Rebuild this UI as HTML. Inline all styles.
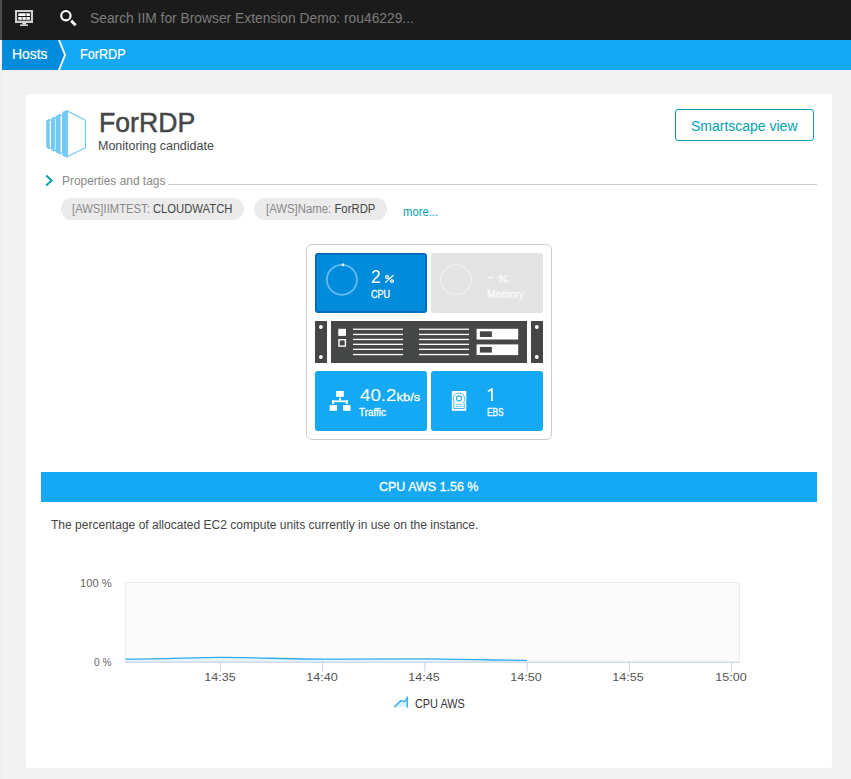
<!DOCTYPE html>
<html><head><meta charset="utf-8">
<style>
*{margin:0;padding:0;box-sizing:border-box}
html,body{width:851px;height:779px;overflow:hidden;background:#f2f2f2;font-family:"Liberation Sans",sans-serif}
.a{position:absolute}
.t{position:absolute;white-space:nowrap;line-height:1;transform-origin:0 0}
</style></head><body>
<!-- left strip -->
<div class="a" style="left:0;top:0;width:2px;height:40px;background:#4d4d4d"></div>
<div class="a" style="left:0;top:40px;width:2px;height:30px;background:#f5f5f5"></div>
<div class="a" style="left:0;top:70px;width:2px;height:709px;background:#efefef"></div>
<!-- top bar -->
<div class="a" style="left:2px;top:0;width:849px;height:40px;background:#1b1b1b"></div>
<svg class="a" style="left:0;top:0" width="100" height="40" viewBox="0 0 100 40">
  <rect x="15" y="10" width="18" height="13" fill="#cfcfcf"/>
  <rect x="17.1" y="12.1" width="13.8" height="8.5" fill="#0e0e0e"/>
  <rect x="18.3" y="13.3" width="11.6" height="2.7" fill="#fff"/>
  <rect x="18.3" y="17" width="11.6" height="2.8" fill="#fff"/>
  <rect x="25.5" y="13.3" width="1" height="2.7" fill="#555"/>
  <rect x="21.6" y="17" width="1" height="2.8" fill="#555"/>
  <rect x="25.5" y="17" width="1" height="2.8" fill="#555"/>
  <rect x="22.4" y="23" width="3.7" height="1.6" fill="#e8e8e8"/>
  <rect x="20" y="24.4" width="8" height="1.6" fill="#cfcfcf"/>
  <circle cx="65.9" cy="15.7" r="4.65" fill="none" stroke="#fff" stroke-width="2.1"/>
  <line x1="71.2" y1="20.8" x2="75.6" y2="25.3" stroke="#fff" stroke-width="3"/>
</svg>
<div id="search" class="t" style="left:90.2px;top:11.1px;font-size:14px;color:#7c7c7c;transform:scaleX(0.9863)">Search IIM for Browser Extension Demo: rou46229...</div>
<!-- breadcrumb -->
<div class="a" style="left:2px;top:40px;width:849px;height:30px;background:#14a8f5"></div>
<svg class="a" style="left:0;top:40px" width="80" height="30" viewBox="0 0 80 30">
  <polygon points="2,0 58.5,0 65,15 58.5,30 2,30" fill="#008cdb"/>
  <polyline points="58.6,-1 65,15 58.6,31" fill="none" stroke="#fff" stroke-width="1.9"/>
</svg>
<div id="hosts" class="t" style="left:12.00px;top:46.95px;font-size:14px;color:#fff;transform:scaleX(0.9943);-webkit-text-stroke:0.2px #fff">Hosts</div>
<div id="bc2" class="t" style="left:80.43px;top:47.05px;font-size:14px;color:#fff;transform:scaleX(0.9040);-webkit-text-stroke:0.2px #fff">ForRDP</div>

<!-- card -->
<div class="a" style="left:26px;top:94px;width:806px;height:674px;background:#fff;border-radius:3px"></div>

<!-- host icon -->
<svg class="a" style="left:40px;top:104px" width="60" height="60" viewBox="40 104 60 60">
  <g stroke="#73c9f5" stroke-width="1.2" fill="#fff" stroke-linejoin="miter">
    <polygon points="49,119.6 51.6,120.4 51.6,147.6 49,148.4"/>
    <polygon points="54.2,117.4 56.3,118.2 56.3,150 54.2,150.8"/>
    <polygon points="59.9,114.6 62.6,115.8 62.6,152.6 59.9,153.6"/>
    <polygon points="67.2,110.9 85.4,120.3 85.4,147.7 67.2,156.8"/>
  </g>
  <g fill="#73c9f5">
    <polygon points="46.2,120.3 48.9,119.3 49.3,119.5 49.3,148.5 48.9,148.7 46.2,147.6"/>
    <polygon points="51.2,118.3 53.9,117 54.4,117.2 54.4,151 53.9,151.2 51.2,149.9"/>
    <polygon points="55.8,115.9 59.2,114.3 60.1,114.5 60.1,153.7 59.2,154 55.8,152.3"/>
    <polygon points="62.3,112.1 66.8,110.3 67.4,110.5 67.4,157.3 66.8,157.5 62.3,155.5"/>
  </g>
</svg>
<div id="title" class="t" style="left:98.66px;top:109.20px;font-size:28px;color:#454646;-webkit-text-stroke:0.5px #454646;transform:scaleX(0.9515)">ForRDP</div>
<div id="subt" class="t" style="left:98.18px;top:140.00px;font-size:12px;color:#454646;transform:scaleX(1.0396)">Monitoring candidate</div>

<!-- smartscape button -->
<div class="a" style="left:675px;top:109px;width:139px;height:32px;border:1px solid #00a1b2;border-radius:3px"></div>
<div id="smart" class="t" style="left:690.80px;top:118.50px;font-size:14px;color:#00a1b2;transform:scaleX(0.9991)">Smartscape view</div>

<!-- properties -->
<svg class="a" style="left:40px;top:170px" width="20" height="20" viewBox="40 170 20 20">
  <polyline points="46.2,175.6 51.6,180.6 46.2,185.6" fill="none" stroke="#00a1b2" stroke-width="2"/>
</svg>
<div id="props" class="t" style="left:61.81px;top:173.80px;font-size:13px;color:#898989;transform:scaleX(0.9168)">Properties and tags</div>
<div class="a" style="left:168px;top:184px;width:649px;height:1px;background:#c9c9cd"></div>

<!-- pills -->
<div class="a" style="left:61px;top:198px;width:183px;height:22px;border-radius:11px;background:#ebebeb"></div>
<div id="pill1" class="t" style="left:72.05px;top:203.30px;font-size:12.5px;color:#898989;transform:scaleX(0.9011)">[AWS]IIMTEST: <span style="color:#454646">CLOUDWATCH</span></div>
<div class="a" style="left:254px;top:198px;width:133px;height:22px;border-radius:11px;background:#ebebeb"></div>
<div id="pill2" class="t" style="left:265.57px;top:203.30px;font-size:12.5px;color:#898989;transform:scaleX(0.9091)">[AWS]Name: <span style="color:#454646">ForRDP</span></div>
<div id="more" class="t" style="left:402.57px;top:205.70px;font-size:12.5px;color:#00a1b2;transform:scaleX(0.9026)">more...</div>


<!-- infographic -->
<div class="a" style="left:306px;top:244px;width:246px;height:196px;border:1px solid #cccccc;border-radius:6px;background:#fff"></div>
<div class="a" style="left:315px;top:253px;width:112px;height:59.5px;background:#008cdb;border:2px solid #006bbb;border-radius:3px"></div>
<div class="a" style="left:431px;top:253px;width:112px;height:59.5px;background:#e3e3e3;border-radius:3px"></div>
<svg class="a" style="left:300px;top:240px" width="260" height="80" viewBox="300 240 260 80">
  <circle cx="341.9" cy="279.8" r="15" fill="none" stroke="#62bcef" stroke-width="1.8"/>
  <ellipse cx="343" cy="264.8" rx="1.2" ry="1.5" fill="#fff"/>
  <circle cx="456" cy="279.8" r="15" fill="none" stroke="#ececec" stroke-width="1.8"/>
</svg>
<div id="cpuv" class="t" style="left:370.9px;top:268.70px;font-size:17.5px;color:#fff;transform:scaleX(0.98)">2</div>
<svg id="cpup" class="a" style="left:380px;top:270px" width="130" height="16" viewBox="380 270 130 16"><g transform="translate(0,0)" fill="none" stroke="#fff" stroke-width="1.25"><ellipse cx="387" cy="276.9" rx="1.55" ry="1.35"/><ellipse cx="392" cy="281.1" rx="1.55" ry="1.35"/><line x1="393.4" y1="275.3" x2="385.2" y2="282.6"/></g><g transform="translate(113.7,0)" fill="none" stroke="#fbfbfb" stroke-width="1.25"><ellipse cx="387" cy="276.9" rx="1.55" ry="1.35"/><ellipse cx="392" cy="281.1" rx="1.55" ry="1.35"/><line x1="393.4" y1="275.3" x2="385.2" y2="282.6"/></g><rect x="487.2" y="276.8" width="7.3" height="1.3" fill="#fbfbfb"/></svg>
<div id="cpul" class="t" style="left:371.00px;top:290.20px;font-size:10px;color:#fff;transform:scaleX(0.9048);-webkit-text-stroke:0.3px #fff">CPU</div>

<div id="meml" class="t" style="left:486.78px;top:290.20px;font-size:10px;color:#fbfbfb;transform:scaleX(1.0306);-webkit-text-stroke:0.3px #fbfbfb">Memory</div>

<svg class="a" style="left:300px;top:315px" width="260" height="55" viewBox="300 315 260 55">
  <rect x="315" y="321" width="12" height="42" fill="#454646"/>
  <circle cx="320.9" cy="327" r="1.9" fill="#fff"/>
  <circle cx="320.9" cy="357" r="1.9" fill="#fff"/>
  <rect x="331" y="321" width="196" height="42" fill="#454646"/>
  <rect x="531" y="321" width="12" height="42" fill="#454646"/>
  <circle cx="536.8" cy="327" r="1.9" fill="#fff"/>
  <circle cx="536.8" cy="357" r="1.9" fill="#fff"/>
  <rect x="338.3" y="328.8" width="7.7" height="7.1" fill="#fff"/>
  <rect x="339" y="339.7" width="6.4" height="6.4" fill="none" stroke="#fff" stroke-width="1.4"/>
  <g fill="#fff">
    <rect x="353" y="328.6" width="50" height="1.3"/>
    <rect x="353" y="333.8" width="50" height="1.3"/>
    <rect x="353" y="338.8" width="50" height="1.3"/>
    <rect x="353" y="343.7" width="50" height="1.3"/>
    <rect x="353" y="348.7" width="50" height="1.3"/>
    <rect x="353" y="353.9" width="50" height="1.3"/>
    <rect x="419" y="328.6" width="50" height="1.3"/>
    <rect x="419" y="333.8" width="50" height="1.3"/>
    <rect x="419" y="338.8" width="50" height="1.3"/>
    <rect x="419" y="343.7" width="50" height="1.3"/>
    <rect x="419" y="348.7" width="50" height="1.3"/>
    <rect x="419" y="353.9" width="50" height="1.3"/>
    <rect x="476.6" y="328.8" width="41.6" height="10.7"/>
    <rect x="476.6" y="344.4" width="41.6" height="10.7"/>
  </g>
  <rect x="479.9" y="331.3" width="12" height="5.7" fill="#454646"/>
  <rect x="479.9" y="346.9" width="12" height="5.7" fill="#454646"/>
</svg>

<div class="a" style="left:315px;top:371px;width:112px;height:59.6px;background:#14a8f5;border-radius:3px"></div>
<div class="a" style="left:431px;top:371px;width:112px;height:59.6px;background:#14a8f5;border-radius:3px"></div>
<svg class="a" style="left:320px;top:380px" width="160" height="40" viewBox="320 380 160 40">
  <g fill="#fff">
    <rect x="336.1" y="391" width="7.7" height="5.8"/>
    <rect x="339.1" y="397.8" width="1.8" height="3"/>
    <rect x="332.1" y="400.4" width="15.7" height="1.8"/>
    <rect x="332.1" y="400.4" width="2" height="3.6"/>
    <rect x="345.8" y="400.4" width="2" height="3.6"/>
    <rect x="329.6" y="405.1" width="7.4" height="5.7"/>
    <rect x="343.1" y="405.1" width="7.4" height="5.7"/>
    <rect x="451.8" y="391" width="14.5" height="19.8"/>
  </g>
  <g fill="none" stroke="#4cb8f3" stroke-width="1">
    <path d="M454.6,402.6 A5.8,5.8 0 1 1 463.4,402.6"/>
    <path d="M454.6,402.6 L453.8,403.4 L453.8,408.5 L464.2,408.5 L464.2,403.4 L463.4,402.6"/>
    <circle cx="459" cy="398.4" r="2.5" stroke="#2db0f4" stroke-width="1.2"/>
    <line x1="455.5" y1="404.6" x2="462.5" y2="404.6" stroke="#80cef7"/>
    <line x1="455.5" y1="406.6" x2="462.5" y2="406.6" stroke="#80cef7"/>
  </g>
</svg>
<div id="trv" class="t" style="left:359.6px;top:387.5px;font-size:16px;color:#fff;transform:scaleX(1.1725)">40.2<span style="font-size:11px;-webkit-text-stroke:0.3px #fff">kb/s</span></div>
<div id="trl" class="t" style="left:358.9px;top:407.7px;font-size:10px;color:#fff;transform:scaleX(0.9893);-webkit-text-stroke:0.3px #fff">Traffic</div>
<svg id="ebsv" class="a" style="left:480px;top:380px" width="20" height="30" viewBox="480 380 20 30"><path d="M487.9,391.3 L491.9,389.2 L491.9,401.1" fill="none" stroke="#fff" stroke-width="1.75" stroke-linejoin="miter"/></svg>
<div id="ebsl" class="t" style="left:486.90px;top:407.60px;font-size:10px;color:#fff;transform:scaleX(0.8250);-webkit-text-stroke:0.3px #fff">EBS</div>

<!-- CPU AWS section -->
<div class="a" style="left:41px;top:472px;width:776px;height:30px;background:#14a8f5"></div>
<div id="cpuaws" class="t" style="left:378.5px;top:479.8px;font-size:13.5px;color:#fff;transform:scaleX(0.9250);-webkit-text-stroke:0.3px #fff">CPU AWS 1.56 %</div>
<div id="desc" class="t" style="left:50.6px;top:519.10px;font-size:12.5px;color:#454646;transform:scaleX(0.9626)">The percentage of allocated EC2 compute units currently in use on the instance.</div>

<!-- chart -->
<div class="a" style="left:125px;top:582px;width:614.5px;height:80.5px;background:#fbfbfb;border:1px solid #ececec;border-bottom:none"></div>
<svg class="a" style="left:0;top:560px" width="851" height="160" viewBox="0 560 851 160">
  <path d="M125.6,662 L125.6,659.2 C170,658.6 200,657.4 220.4,657.4 C250,657.4 290,659 322.6,659.1 C360,659.1 400,658.8 424.8,658.8 C460,658.9 500,660.2 527,660.4 L527,662 Z" fill="#e6f4fd"/>
  <path d="M125.6,659.2 C170,658.6 200,657.4 220.4,657.4 C250,657.4 290,659 322.6,659.1 C360,659.1 400,658.8 424.8,658.8 C460,658.9 500,660.2 527,660.4" fill="none" stroke="#2eacef" stroke-width="1.35"/>
  <rect x="125" y="661.6" width="614.5" height="1.2" fill="#c9d3e4"/>
  <g fill="#c9d3e4">
    <rect x="220" y="662" width="1" height="9.5"/>
    <rect x="322.2" y="662" width="1" height="9.5"/>
    <rect x="424.4" y="662" width="1" height="9.5"/>
    <rect x="526.6" y="662" width="1" height="9.5"/>
    <rect x="628.8" y="662" width="1" height="9.5"/>
    <rect x="731" y="662" width="1" height="9.5"/>
  </g>
  <path d="M394.3,707.4 L394.3,706.8 L400.9,700.6 L404.6,701.6 L407.3,697.8 L407.3,707.4 Z" fill="#dff1fc"/>
  <polyline points="394.3,707 400.9,700.6 404.6,701.6 407.3,697.8 407.3,707.4" fill="none" stroke="#36b3f0" stroke-width="1.5"/>
</svg>
<div id="y100" class="t" style="left:80.01px;top:578.00px;font-size:11.5px;color:#666;transform:scaleX(0.9719)">100 %</div>
<div id="y0" class="t" style="left:93.81px;top:657.10px;font-size:11.5px;color:#666;transform:scaleX(0.8850)">0 %</div>
<div id="x1" class="t" style="left:189.60px;top:671.5px;width:60px;text-align:center;font-size:11.5px;color:#555;transform:scaleX(1.09);transform-origin:50% 0">14:35</div>
<div id="x2" class="t" style="left:291.80px;top:671.5px;width:60px;text-align:center;font-size:11.5px;color:#555;transform:scaleX(1.09);transform-origin:50% 0">14:40</div>
<div id="x3" class="t" style="left:394.00px;top:671.5px;width:60px;text-align:center;font-size:11.5px;color:#555;transform:scaleX(1.09);transform-origin:50% 0">14:45</div>
<div id="x4" class="t" style="left:496.20px;top:671.5px;width:60px;text-align:center;font-size:11.5px;color:#555;transform:scaleX(1.09);transform-origin:50% 0">14:50</div>
<div id="x5" class="t" style="left:598.40px;top:671.5px;width:60px;text-align:center;font-size:11.5px;color:#555;transform:scaleX(1.09);transform-origin:50% 0">14:55</div>
<div id="x6" class="t" style="left:700.60px;top:671.5px;width:60px;text-align:center;font-size:11.5px;color:#555;transform:scaleX(1.09);transform-origin:50% 0">15:00</div>
<div id="legend" class="t" style="left:415.14px;top:698.20px;font-size:12px;color:#333;transform:scaleX(0.9071)">CPU AWS</div>

</body></html>
